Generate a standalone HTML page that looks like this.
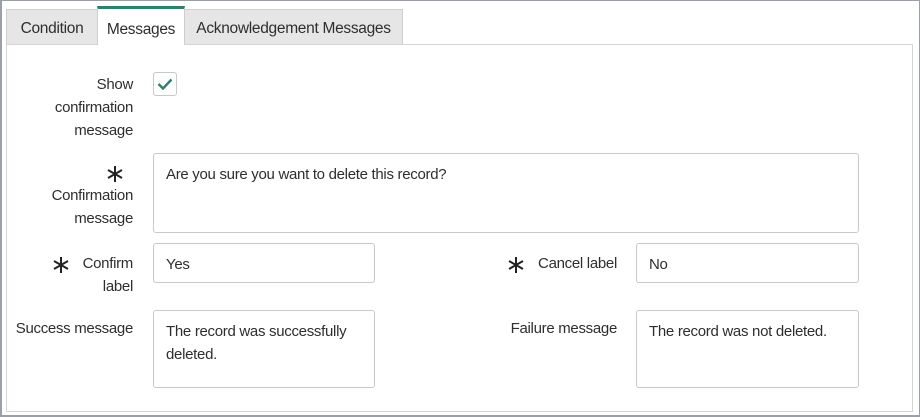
<!DOCTYPE html>
<html><head><style>
body{margin:0;width:920px;height:417px;background:#fff;font-family:"Liberation Sans",sans-serif;color:#2e2e2e;font-size:15px;letter-spacing:-0.3px;position:relative;overflow:hidden}
.a{position:absolute}
.frame{left:0;top:0;width:917px;height:414px;border:1px solid #9aa0a6;border-width:1px 2px 2px 2px}
.panel{left:6px;top:44px;width:905px;height:366px;border:1px solid #d4d4d4}
.tab{top:9px;height:35px;background:#e6e6e6;border:1px solid #cfcfcf;border-bottom:none;box-sizing:border-box;text-align:center;line-height:38px;font-size:15.5px}
.box{border:1px solid #c9c9c9;border-radius:3px;box-sizing:border-box;background:#fff;padding:9px 12px;line-height:23px;font-size:15px}
.lbl{text-align:right;line-height:23px}
svg.st{position:absolute}
</style></head><body>
<div class="a frame"></div>
<div class="a panel"></div>
<div class="a tab" style="left:6px;width:92px;">Condition</div>
<div class="a tab" style="left:97px;top:6px;height:39px;width:88px;background:#fff;border-top:3px solid #2e8070;line-height:42px">Messages</div>
<div class="a tab" style="left:184px;width:219px;">Acknowledgement Messages</div>

<div class="a lbl" style="left:20px;width:113px;top:73px">Show<br>confirmation<br>message</div>
<div class="a" style="left:153px;top:72px;width:22px;height:22px;border:1px solid #c9c9c9;border-radius:3px"></div>
<svg class="a" style="left:157px;top:77px" width="16" height="14" viewBox="0 0 16 14"><path d="M1.5 7 L6 11.5 L14.5 2.5" fill="none" stroke="#2e8070" stroke-width="2.4"/></svg>

<svg class="st" style="left:106px;top:165px" width="18" height="18" viewBox="0 0 18 18"><g stroke="#222" stroke-width="2"><path d="M9 1V17M2 5L16 13M2 13L16 5"/></g></svg>
<div class="a lbl" style="left:20px;width:113px;top:184px">Confirmation<br>message</div>
<div class="a box" style="left:153px;top:153px;width:706px;height:80px">Are you sure you want to delete this record?</div>

<svg class="st" style="left:52px;top:256px" width="18" height="18" viewBox="0 0 18 18"><g stroke="#222" stroke-width="2"><path d="M9 1V17M2 5L16 13M2 13L16 5"/></g></svg>
<div class="a lbl" style="left:20px;width:113px;top:252px">Confirm<br>label</div>
<div class="a box" style="left:153px;top:243px;width:222px;height:40px">Yes</div>

<svg class="st" style="left:507px;top:256px" width="18" height="18" viewBox="0 0 18 18"><g stroke="#222" stroke-width="2"><path d="M9 1V17M2 5L16 13M2 13L16 5"/></g></svg>
<div class="a lbl" style="left:500px;width:117px;top:252px">Cancel label</div>
<div class="a box" style="left:636px;top:243px;width:223px;height:40px">No</div>

<div class="a lbl" style="left:10px;width:123px;top:317px">Success message</div>
<div class="a box" style="left:153px;top:310px;width:222px;height:78px">The record was successfully deleted.</div>
<div class="a lbl" style="left:490px;width:127px;top:317px">Failure message</div>
<div class="a box" style="left:636px;top:310px;width:223px;height:78px">The record was not deleted.</div>
</body></html>
